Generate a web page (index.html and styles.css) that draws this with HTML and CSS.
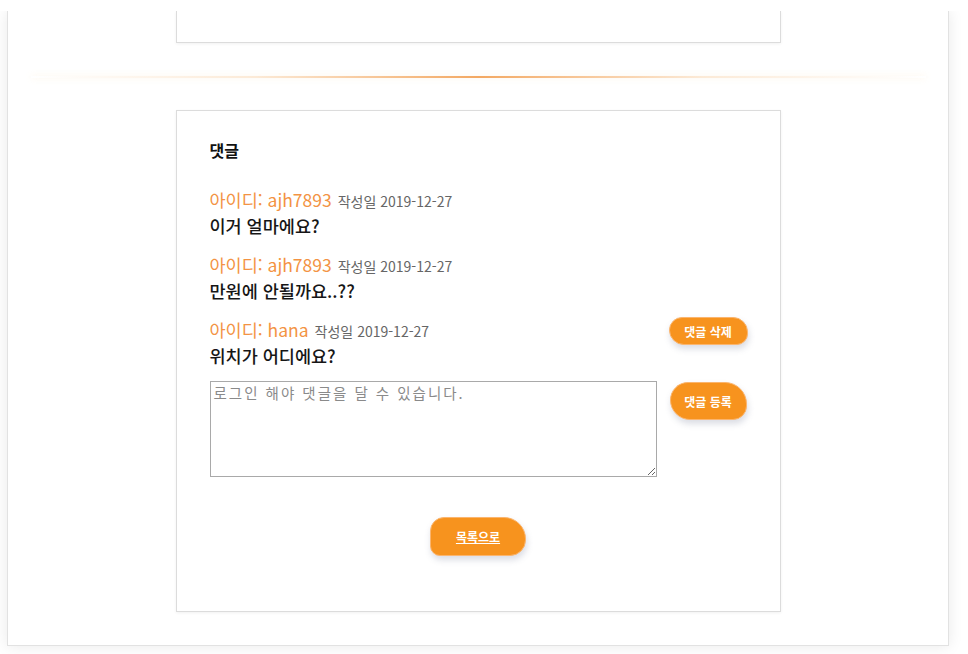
FILE: index.html
```html
<!DOCTYPE html>
<html lang="ko">
<head>
<meta charset="utf-8">
<title>댓글</title>
<link rel="stylesheet" href="styles.css">
</head>
<body>
<div class="page">
  <div class="panel">
    <div class="prev-card"></div>
    <div class="divider"></div>
    <section class="comment-card">
      <h2 class="comment-title">댓글</h2>
      <ul class="comment-list">
        <li class="comment">
          <div class="comment-body">
            <div class="comment-meta"><span class="comment-id">아이디: ajh7893</span><span class="comment-date">작성일 2019-12-27</span></div>
            <div class="comment-text">이거 얼마에요?</div>
          </div>
        </li>
        <li class="comment">
          <div class="comment-body">
            <div class="comment-meta"><span class="comment-id">아이디: ajh7893</span><span class="comment-date">작성일 2019-12-27</span></div>
            <div class="comment-text">만원에 안될까요..??</div>
          </div>
        </li>
        <li class="comment">
          <div class="comment-body">
            <div class="comment-meta"><span class="comment-id">아이디: hana</span><span class="comment-date">작성일 2019-12-27</span></div>
            <div class="comment-text">위치가 어디에요?</div>
          </div>
          <button class="btn btn-delete" type="button">댓글 삭제</button>
        </li>
      </ul>
      <div class="comment-form">
        <textarea class="comment-input" placeholder="로그인 해야 댓글을 달 수 있습니다."></textarea>
        <button class="btn btn-submit" type="button">댓글 등록</button>
      </div>
      <div class="list-row">
        <a class="btn btn-list" href="#">목록으로</a>
      </div>
    </section>
  </div>
</div>
</body>
</html>
```

FILE: styles.css
```css
html, body {
  margin: 0;
  padding: 0;
  background: #ffffff;
}

body {
  font-family: "Noto Sans CJK KR", "Noto Sans", sans-serif;
  color: #222;
  overflow: hidden;
}

.page {
  padding-top: 11px;
  height: 643px;
}

.panel {
  margin-left: 7px;
  width: 942px;
  height: 635px;
  box-sizing: border-box;
  background: #fff;
  border: 1px solid #e2e2e2;
  border-top: none;
  box-shadow: 0 0 14px rgba(0, 0, 0, 0.09);
  clip-path: inset(0 -30px -30px -30px);
  display: flex;
  flex-direction: column;
  align-items: center;
}

.prev-card {
  width: 605px;
  height: 32px;
  box-sizing: border-box;
  border: 1px solid #dcdcdc;
  border-top: none;
  box-shadow: 0 1px 3px rgba(0, 0, 0, 0.06);
}

.divider {
  margin-top: 33px;
  width: 895px;
  height: 2px;
  background: linear-gradient(to right, rgba(246, 178, 107, 0) 0%, rgba(246, 195, 140, 0.35) 25%, #f3a862 50%, rgba(246, 195, 140, 0.35) 75%, rgba(246, 178, 107, 0) 100%);
  box-shadow: 0 0 6px rgba(250, 215, 160, 0.3);
}

.comment-card {
  margin-top: 32px;
  width: 605px;
  height: 502px;
  box-sizing: border-box;
  border: 1px solid #dcdcdc;
  box-shadow: 0 1px 3px rgba(0, 0, 0, 0.06);
  padding: 29px 33px 0 33px;
}

.comment-title {
  margin: 0;
  font-size: 16px;
  line-height: 20px;
  font-weight: 700;
  color: #111;
}

.comment-list {
  list-style: none;
  margin: 27px 0 0 0;
  padding: 0;
}

.comment {
  display: flex;
  justify-content: space-between;
  align-items: flex-start;
}

.comment + .comment {
  margin-top: 13px;
}

.comment-meta {
  height: 26px;
  display: flex;
  align-items: baseline;
  gap: 6px;
  white-space: nowrap;
  line-height: 26px;
}

.comment-id {
  font-size: 17.5px;
  line-height: 26px;
  color: #f39343;
}

.comment-date {
  font-size: 14px;
  line-height: 26px;
  color: #666;
}

.comment-text {
  height: 26px;
  font-size: 17.5px;
  line-height: 26px;
  font-weight: 500;
  color: #161616;
}

.btn {
  display: inline-flex;
  align-items: center;
  justify-content: center;
  box-sizing: border-box;
  background: #f7931e;
  color: #fff;
  border: 1px solid #fbb56e;
  font-family: "Noto Sans CJK KR", "Noto Sans", sans-serif;
  font-size: 12px;
  font-weight: 700;
  padding: 0;
  box-shadow: 1px 4px 6px rgba(90, 100, 130, 0.22);
  cursor: pointer;
}

.btn-delete {
  width: 79px;
  height: 28px;
  margin-right: -1px;
  border-radius: 14px 16px 12px 16px;
}

.comment-form {
  margin-top: 12px;
  display: flex;
  align-items: flex-start;
  gap: 13px;
}

.comment-input {
  width: 447px;
  height: 96px;
  box-sizing: border-box;
  margin: 0;
  border: 1px solid #a9a9a9;
  padding: 2px 3px;
  font-family: "Noto Sans CJK KR", "Noto Sans", sans-serif;
  font-size: 14.5px;
  letter-spacing: 2px;
  line-height: 18px;
  resize: both;
}

.comment-input::placeholder {
  color: #8a8a8a;
}

.btn-submit {
  margin-top: 1px;
  width: 77px;
  height: 38px;
  border-radius: 18px 22px 14px 20px;
}

.list-row {
  margin-top: 40px;
  display: flex;
  justify-content: center;
}

.btn-list {
  width: 96px;
  height: 39px;
  border-radius: 14px 22px 16px 10px;
  text-decoration: underline;
}
```
